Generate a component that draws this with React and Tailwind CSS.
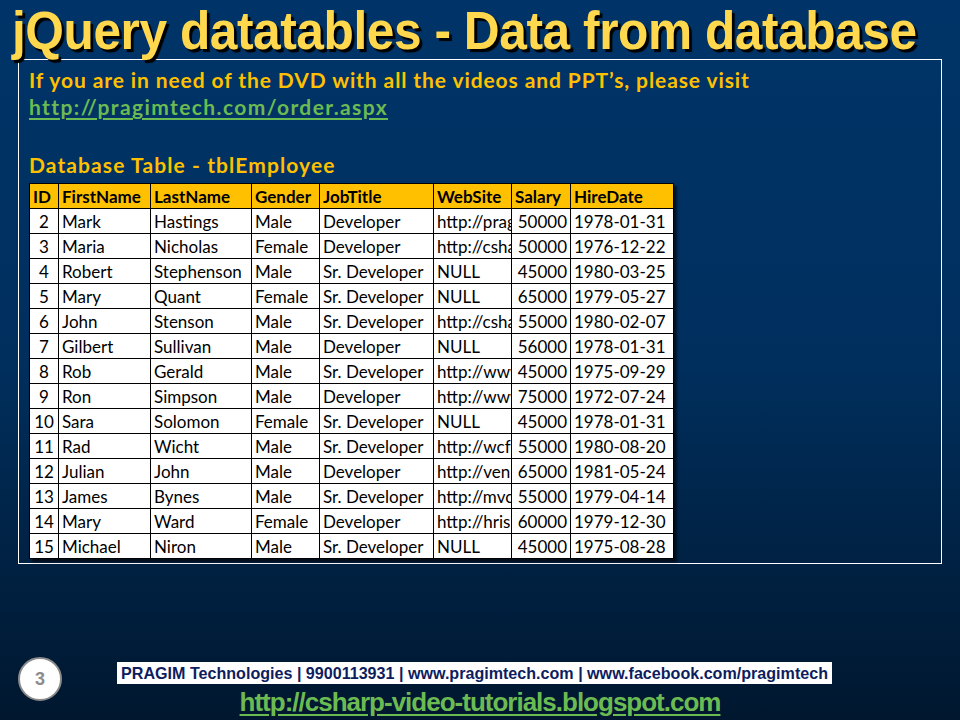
const rows = [
  ['2', 'Mark', 'Hastings', 'Male', 'Developer', 'http://pragimtech.com', '50000', '1978-01-31'],
  ['3', 'Maria', 'Nicholas', 'Female', 'Developer', 'http://csharp-video-tutorials', '50000', '1976-12-22'],
  ['4', 'Robert', 'Stephenson', 'Male', 'Sr. Developer', 'NULL', '45000', '1980-03-25'],
  ['5', 'Mary', 'Quant', 'Female', 'Sr. Developer', 'NULL', '65000', '1979-05-27'],
  ['6', 'John', 'Stenson', 'Male', 'Sr. Developer', 'http://csharp-video-tutorials', '55000', '1980-02-07'],
  ['7', 'Gilbert', 'Sullivan', 'Male', 'Developer', 'NULL', '56000', '1978-01-31'],
  ['8', 'Rob', 'Gerald', 'Male', 'Sr. Developer', 'http://www.pragimtech.com', '45000', '1975-09-29'],
  ['9', 'Ron', 'Simpson', 'Male', 'Developer', 'http://www.google.com', '75000', '1972-07-24'],
  ['10', 'Sara', 'Solomon', 'Female', 'Sr. Developer', 'NULL', '45000', '1978-01-31'],
  ['11', 'Rad', 'Wicht', 'Male', 'Sr. Developer', 'http://wcf.com', '55000', '1980-08-20'],
  ['12', 'Julian', 'John', 'Male', 'Developer', 'http://venkat.com', '65000', '1981-05-24'],
  ['13', 'James', 'Bynes', 'Male', 'Sr. Developer', 'http://mvc.com', '55000', '1979-04-14'],
  ['14', 'Mary', 'Ward', 'Female', 'Developer', 'http://hris.com', '60000', '1979-12-30'],
  ['15', 'Michael', 'Niron', 'Male', 'Sr. Developer', 'NULL', '45000', '1975-08-28'],
];

const cols = [
  { label: 'ID', w: 'w-[29px]', align: 'text-center' },
  { label: 'FirstName', w: 'w-[92px]', align: 'text-left' },
  { label: 'LastName', w: 'w-[101px]', align: 'text-left' },
  { label: 'Gender', w: 'w-[68px]', align: 'text-left' },
  { label: 'JobTitle', w: 'w-[114px]', align: 'text-left' },
  { label: 'WebSite', w: 'w-[78px]', align: 'text-left' },
  { label: 'Salary', w: 'w-[59px]', align: 'text-right' },
  { label: 'HireDate', w: 'w-[103px]', align: 'text-left' },
];

const Cell = ({ col, children, head }) => (
  <td
    className={`${head ? 'text-left' : col.align} h-[25px] border border-black px-[3px] overflow-hidden whitespace-nowrap leading-[23px] [text-overflow:clip]`}
  >
    {children}
  </td>
);

export default function App() {
  return (
    <div className="w-[960px] h-[720px] flex flex-col bg-linear-to-b from-[#003468] via-[#002f5e] to-[#00172f] overflow-hidden">
      <h1
        className="ml-[12px] mt-[2px] h-[56px] text-[54px] leading-[56px] font-bold text-[#ffd84d] whitespace-nowrap tracking-[-0.5px] origin-left scale-x-[0.92] [text-shadow:3px_3px_1px_#000]"
        style={{ fontFamily: '"Liberation Sans", Arial, sans-serif' }}
      >
        jQuery datatables - Data from database
      </h1>

      <section
        className="ml-[18px] mt-[1px] w-[924px] h-[505px] border border-white pl-[10px] pt-[6px]"
        style={{ fontFamily: 'Lato, "Liberation Sans", sans-serif' }}
      >
        <p className="text-[21px] leading-[27px] font-bold text-[#ffc000] tracking-[0.9px] whitespace-nowrap">
          If you are in need of the DVD with all the videos and PPT’s, please visit
        </p>
        <a className="block w-fit text-[21px] leading-[27px] font-bold text-[#6cbb52] tracking-[1.4px] underline underline-offset-[3px]">
          http://pragimtech.com/order.aspx
        </a>
        <h2 className="mt-[32px] text-[21px] leading-[26px] font-bold text-[#ffc000] tracking-[1.1px]">
          Database Table - tblEmployee
        </h2>
        <table className="mt-[5px] w-[644px] table-fixed border-collapse bg-white text-black text-[17px] shadow-[3px_3px_2px_rgba(0,0,0,0.6)]">
          <colgroup>
            {cols.map(c => (
              <col key={c.label} className={c.w} />
            ))}
          </colgroup>
          <thead>
            <tr className="bg-[#ffc000] font-bold">
              {cols.map(c => (
                <Cell key={c.label} col={c} head>{c.label}</Cell>
              ))}
            </tr>
          </thead>
          <tbody>
            {rows.map(r => (
              <tr key={r[0]}>
                {r.map((v, i) => (
                  <Cell key={i} col={cols[i]}>{v}</Cell>
                ))}
              </tr>
            ))}
          </tbody>
        </table>
      </section>

      <footer className="mt-auto h-[64px] relative flex flex-col items-center">
        <div className="absolute left-[18px] top-[1px] w-[44px] h-[44px] rounded-full bg-white border-2 border-[#8a8a8a] flex items-center justify-center text-[18px] text-[#8c8c8c] font-bold"
          style={{ fontFamily: '"Liberation Sans", sans-serif' }}>
          3
        </div>
        <div
          className="bg-white ml-[-11px] mt-[6px] h-[22px] px-[4px] flex items-center text-[16.1px] font-bold text-[#0e1d5e] whitespace-nowrap"
          style={{ fontFamily: '"Liberation Sans", sans-serif' }}
        >
          PRAGIM Technologies | 9900113931 | www.pragimtech.com | www.facebook.com/pragimtech
        </div>
        <a
          className="mt-[3px] text-[26px] leading-[30px] font-bold text-[#6cbb52] underline underline-offset-[3px] tracking-[-1px] whitespace-nowrap"
          style={{ fontFamily: '"Liberation Sans", sans-serif' }}
        >
          http://csharp-video-tutorials.blogspot.com
        </a>
      </footer>
    </div>
  );
}
